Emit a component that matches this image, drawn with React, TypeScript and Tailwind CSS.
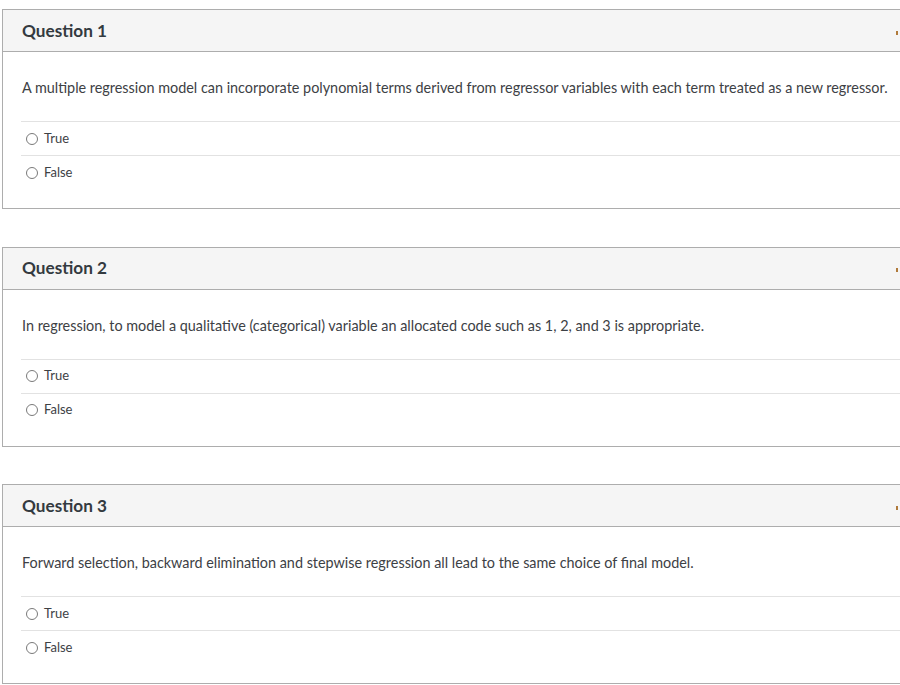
import React from 'react';

const questions = [
  {
    title: 'Question 1',
    text: 'A multiple regression model can incorporate polynomial terms derived from regressor variables with each term treated as a new regressor.',
  },
  {
    title: 'Question 2',
    text: 'In regression, to model a qualitative (categorical) variable an allocated code such as 1, 2, and 3 is appropriate.',
  },
  {
    title: 'Question 3',
    text: 'Forward selection, backward elimination and stepwise regression all lead to the same choice of final model.',
  },
];

const QuestionCard = ({ title, text }: { title: string; text: string }) => (
  <div className="w-[1000px] border border-[#adadad] mb-[37.5px] bg-white">
    <div className="h-[42px] flex items-center bg-[#f5f5f5] border-b border-[#adadad] pl-[19px]">
      <span className="text-[17.2px] font-bold text-[#333a3f]">{title}</span>
      {/* points label, clipped by the window edge */}
      <span className="ml-auto mr-[103px] w-[2px] h-[4px] mt-[4px] bg-[#b07a3a]" />
    </div>
    <div className="pl-[18px] pt-[26px] pb-[19px]">
      <p className="pl-px text-[14.4px] leading-[20px] text-[#3d4145]">{text}</p>
      <div className="mt-[23px]">
        {['True', 'False'].map((label) => (
          <label
            key={label}
            className="h-[34px] flex items-center gap-[6px] pl-[5px] border-t border-[#e2e2e2] text-[13px] text-[#3d4145]"
          >
            <span className="w-[12px] h-[12px] rounded-full border border-[#7a7a7a] bg-white" />
            <span>{label}</span>
          </label>
        ))}
      </div>
    </div>
  </div>
);

export default function App() {
  return (
    <div
      className="w-[900px] h-[685px] overflow-hidden bg-white pt-[9px] pl-[2px]"
      style={{ fontFamily: 'Lato, "Noto Sans", sans-serif' }}
    >
      {questions.map((q) => (
        <QuestionCard key={q.title} title={q.title} text={q.text} />
      ))}
    </div>
  );
}
